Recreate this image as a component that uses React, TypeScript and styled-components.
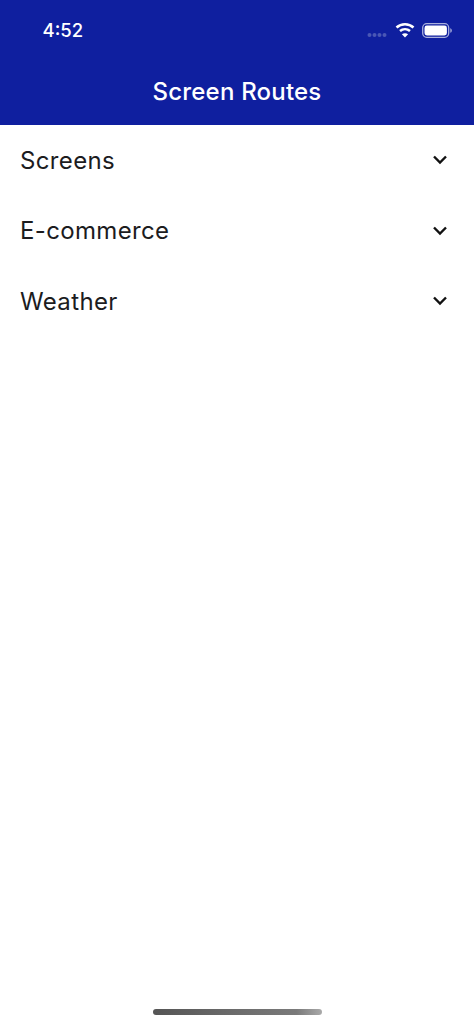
import React from "react";
import styled, { createGlobalStyle } from "styled-components";

const Global = createGlobalStyle`
  html, body { margin: 0; padding: 0; background: #fff; }
  body { font-family: Inter, "Liberation Sans", sans-serif; }
`;

const Page = styled.div`
  width: 474px;
  height: 1025px;
  display: flex;
  flex-direction: column;
  background: #fff;
  overflow: hidden;
`;

const Header = styled.header`
  height: 125px;
  flex: none;
  box-sizing: border-box;
  background: #0f1f9f;
  color: #fff;
  display: flex;
  flex-direction: column;
`;

const StatusBar = styled.div`
  height: 60px;
  box-sizing: border-box;
  padding: 0 22px 0 42.5px;
  display: flex;
  align-items: center;
  justify-content: space-between;
`;

const Time = styled.span`
  font-size: 18.5px;
  font-weight: 500;
  line-height: 60px;
`;

const StatusIcons = styled.div`
  display: flex;
  align-items: center;
`;

const Title = styled.h1`
  margin: 0;
  font-size: 24px;
  font-weight: 500;
  line-height: 28px;
  letter-spacing: 0.2px;
  text-align: center;
  padding-top: 18px;
`;

const List = styled.div`
  flex: 1;
  display: flex;
  flex-direction: column;
`;

const Row = styled.div`
  height: 70.5px;
  flex: none;
  box-sizing: border-box;
  padding: 0 26px 0 20px;
  display: flex;
  align-items: center;
  justify-content: space-between;
`;

const Label = styled.span`
  font-size: 24px;
  font-weight: 400;
  color: #1c1c1e;
  letter-spacing: 0.35px;
`;

const HomeBar = styled.div`
  flex: none;
  width: 169px;
  height: 6px;
  margin: 0 0 10px 153px;
  border-radius: 3px;
  background: linear-gradient(90deg, #555 0%, #6c6c6c 50%, #7a7a7a 85%, #aaa 100%);
`;

const Chevron = () => (
  <svg width="16" height="12" viewBox="0 0 16 12" fill="none">
    <path d="M2 2.5L8 8.5L14 2.5" stroke="#111" strokeWidth="2.4" />
  </svg>
);

const Signal = () => (
  <svg width="22" height="6" viewBox="0 0 22 6" style={{ marginRight: 7, marginTop: 10 }}>
    {[2.5, 7.5, 12.5, 17.5].map((x) => (
      <circle key={x} cx={x} cy="3" r="2" fill="#4a57b5" />
    ))}
  </svg>
);

const Wifi = () => (
  <svg width="20" height="16" viewBox="0 0 20 16" fill="none" style={{ marginRight: 7, marginLeft: -1 }}>
    <path d="M1.5 5.5C6.3 1.2 13.7 1.2 18.5 5.5" stroke="#fff" strokeWidth="2.6" />
    <path d="M5 9C7.9 6.6 12.1 6.6 15 9" stroke="#fff" strokeWidth="2.6" />
    <path d="M10 15.5L6.9 12.2C8.7 10.8 11.3 10.8 13.1 12.2Z" fill="#fff" />
  </svg>
);

const Battery = () => (
  <svg width="30" height="15" viewBox="0 0 30 15" fill="none">
    <rect x="0.7" y="0.7" width="26" height="13.6" rx="4" stroke="#aab0dd" strokeWidth="1.3" />
    <rect x="2.5" y="2.5" width="22.4" height="10" rx="2.4" fill="#fff" />
    <path d="M28.3 5.2C29.3 5.6 29.8 6.4 29.8 7.5C29.8 8.6 29.3 9.4 28.3 9.8Z" fill="#aab0dd" />
  </svg>
);

const items = ["Screens", "E-commerce", "Weather"];

export default function App() {
  return (
    <Page>
      <Global />
      <Header>
        <StatusBar>
          <Time>4:52</Time>
          <StatusIcons>
            <Signal />
            <Wifi />
            <Battery />
          </StatusIcons>
        </StatusBar>
        <Title>Screen Routes</Title>
      </Header>
      <List>
        {items.map((item) => (
          <Row key={item}>
            <Label>{item}</Label>
            <Chevron />
          </Row>
        ))}
      </List>
      <HomeBar />
    </Page>
  );
}
